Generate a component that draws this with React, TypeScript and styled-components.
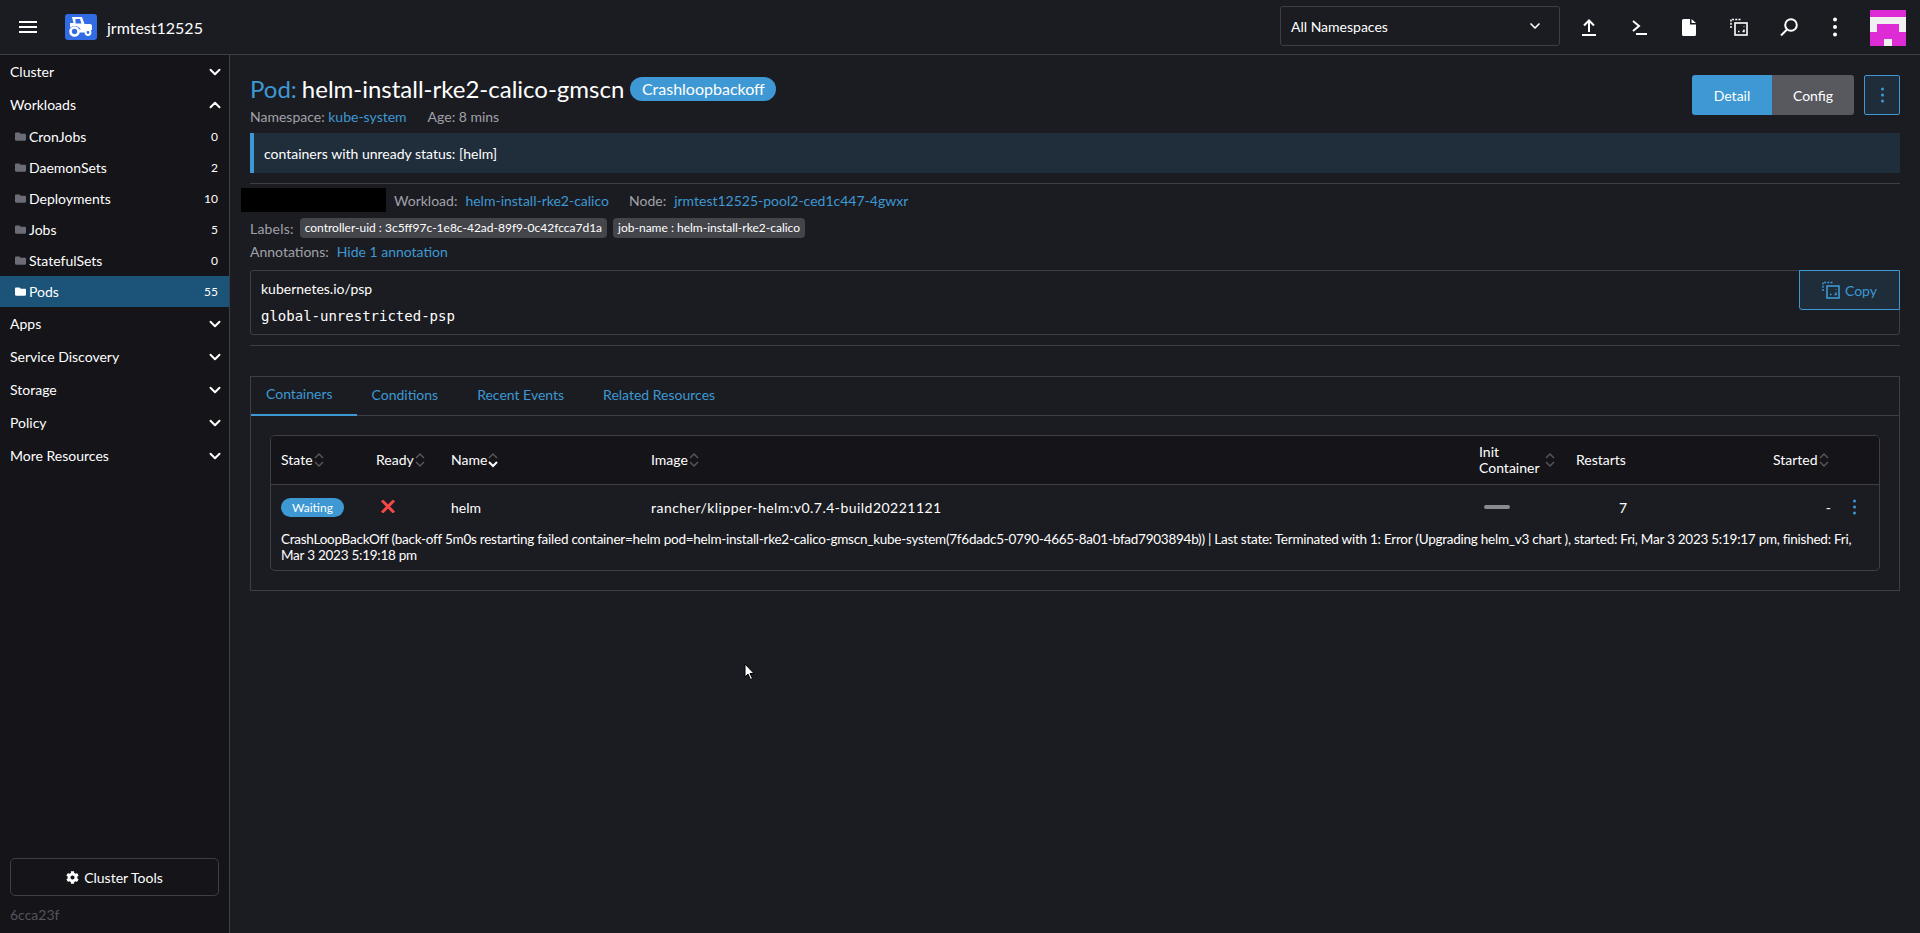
import styled, { createGlobalStyle } from "styled-components"
import { FaCog, FaFolder } from "react-icons/fa"
import { FiChevronDown, FiChevronUp } from "react-icons/fi"

const GlobalStyle = createGlobalStyle`
  html, body { margin: 0; padding: 0; height: 100%; background: #1b1c21; }
  body { font-family: Lato, "Open Sans", sans-serif; font-size: 14px; color: #fff; overflow: hidden; }
  * { box-sizing: border-box; }
  #root { height: 100%; }
`

const Page = styled.div`
  position: relative;
  height: 933px;
  display: flex;
  flex-direction: column;
`

const Header = styled.header`
  height: 55px;
  flex: none;
  display: flex;
  align-items: center;
  border-bottom: 1px solid #3e3f44;
  background: #1b1c21;
`
const MenuButton = styled.div`
  width: 18px;
  height: 12px;
  margin: 0 28px 0 19px;
  border-top: 2px solid #fff;
  border-bottom: 2px solid #fff;
  position: relative;
  &::after {
    content: "";
    position: absolute;
    left: 0;
    right: 0;
    top: 3px;
    height: 2px;
    background: #fff;
  }
`
const LogoTile = styled.div`
  width: 32px;
  height: 26px;
  border-radius: 3px;
  background: #326ce5;
  display: flex;
  align-items: center;
  justify-content: center;
`
const ClusterName = styled.div`
  margin-left: 10px;
  font-size: 16px;
  flex: 1;
`
const NamespaceSelect = styled.div`
  width: 280px;
  height: 40px;
  margin-bottom: 2px;
  border: 1px solid #3e3f44;
  border-radius: 3px;
  display: flex;
  align-items: center;
  justify-content: space-between;
  padding: 0 16px 0 10px;
  font-size: 14px;
  svg { font-size: 16px; stroke-width: 2.5; }
`
const HeaderIcons = styled.div`
  display: flex;
  align-items: center;
  margin-left: 4px;
`
const HeaderIcon = styled.div<{ $narrow?: boolean }>`
  width: ${({ $narrow }) => ($narrow ? "42px" : "50px")};
  height: 40px;
  display: flex;
  align-items: center;
  justify-content: center;
`
const Avatar = styled.svg`
  width: 36px;
  height: 36px;
  margin: 2px 14px 0 14px;
  display: block;
`

const Body = styled.div`
  flex: 1;
  display: flex;
  min-height: 0;
`
const Sidebar = styled.aside`
  width: 230px;
  flex: none;
  background: #141419;
  border-right: 1px solid #3e3f44;
  display: flex;
  flex-direction: column;
  justify-content: space-between;
`
const GroupHead = styled.div`
  height: 33px;
  display: flex;
  align-items: center;
  justify-content: space-between;
  padding: 0 5px 0 10px;
  font-size: 14px;
  svg { font-size: 18px; stroke-width: 2.6; }
`
const NavItem = styled.div<{ $active?: boolean }>`
  height: 31px;
  display: flex;
  align-items: center;
  padding: 0 11px 0 15px;
  font-size: 14px;
  background: ${({ $active }) => ($active ? "#1b5478" : "transparent")};
  svg { font-size: 11px; color: ${({ $active }) => ($active ? "#fff" : "#6c6c76")}; margin-right: 3px; }
`
const NavLabel = styled.span`
  flex: 1;
`
const NavCount = styled.span`
  font-size: 12px;
`
const SideFooter = styled.div`
  padding: 0 10px 10px;
`
const ToolsButton = styled.div`
  width: 209px;
  height: 38px;
  border: 1px solid #3e3f44;
  border-radius: 5px;
  display: flex;
  align-items: center;
  justify-content: center;
  gap: 5px;
  font-size: 14px;
  svg { font-size: 13px; }
`
const Version = styled.div`
  margin-top: 10px;
  font-size: 14px;
  color: #55555c;
`

const Main = styled.main`
  flex: 1;
  min-width: 0;
  padding: 18px 20px 0 20px;
`
const TitleRow = styled.div`
  display: flex;
  justify-content: space-between;
  align-items: flex-start;
`
const TitleWrap = styled.div``
const Title = styled.h1`
  margin: 0;
  height: 31px;
  display: flex;
  align-items: center;
  font-size: 24px;
  font-weight: 400;
  line-height: 31px;
`
const TitleKind = styled.span`
  color: #3d98d3;
  margin-right: 5px;
`
const StateBadge = styled.span`
  margin-left: 6px;
  height: 24px;
  width: 146px;
  border-radius: 12px;
  background: #3d98d3;
  font-size: 16px;
  line-height: 24px;
  text-align: center;
`
const SubLine = styled.div`
  margin-top: 4px;
  display: flex;
  gap: 21px;
  font-size: 14px;
  line-height: 18px;
  color: #a1a1aa;
`
const Link = styled.span`
  color: #3d98d3;
`
const Actions = styled.div`
  display: flex;
  margin-top: 2px;
`
const ModeButton = styled.div<{ $on?: boolean }>`
  width: ${({ $on }) => ($on ? "80px" : "82px")};
  height: 40px;
  display: flex;
  align-items: center;
  justify-content: center;
  font-size: 14px;
  background: ${({ $on }) => ($on ? "#3d98d3" : "#58595f")};
  border-radius: ${({ $on }) => ($on ? "3px 0 0 3px" : "0 3px 3px 0")};
`
const ActionMenu = styled.div`
  width: 36px;
  height: 40px;
  margin-left: 10px;
  background: #1f2d3a;
  border: 1px solid #3d98d3;
  border-radius: 2px;
  display: flex;
  align-items: center;
  justify-content: center;
`
const Banner = styled.div`
  margin-top: 7px;
  height: 40px;
  background: #202d3b;
  border-left: 4px solid #3d98d3;
  display: flex;
  align-items: center;
  padding-left: 10px;
  font-size: 14px;
`
const Rule = styled.hr`
  margin: 10px 0 0;
  border: 0;
  border-top: 1px solid #3e3f44;
`
const InfoRow = styled.div`
  height: 24px;
  margin: 4px 0 0 -9px;
  display: flex;
  align-items: center;
  color: #a1a1aa;
  font-size: 14px;
`
const Redacted = styled.div`
  width: 145px;
  height: 24px;
  background: #000;
  margin-right: 8px;
`
const Key = styled.span`
  margin-right: 8px;
`
const NodeKey = styled(Key)`
  margin-left: 20px;
`
const LabelsRow = styled.div`
  height: 20px;
  margin-top: 6px;
  display: flex;
  align-items: center;
  gap: 6px;
  color: #a1a1aa;
`
const LabelsKey = styled.span`
  letter-spacing: 0.2px;
`
const Chip = styled.span`
  height: 20px;
  line-height: 20px;
  padding: 0 5px;
  border-radius: 4px;
  background: #44454a;
  color: #fff;
  font-size: 12px;
`
const AnnotationRow = styled.div`
  margin-top: 5px;
  height: 18px;
  line-height: 18px;
  color: #a1a1aa;
  display: flex;
`
const AnnotationBox = styled.div`
  position: relative;
  margin-top: 9px;
  height: 65px;
  border: 1px solid #3e3f44;
  border-radius: 3px;
  padding: 9px 10px;
`
const AnnotationKey = styled.div`
  font-size: 14px;
  line-height: 18px;
`
const AnnotationValue = styled.div`
  margin-top: 9px;
  font-family: "DejaVu Sans Mono", "Liberation Mono", monospace;
  font-size: 14px;
  line-height: 18px;
`
const CopyButton = styled.div`
  position: absolute;
  top: -1px;
  right: -1px;
  width: 101px;
  height: 40px;
  background: #1f2d3a;
  border: 1px solid #3d98d3;
  border-radius: 0 0 0 3px;
  color: #3d98d3;
  display: flex;
  align-items: center;
  justify-content: center;
  gap: 5px;
`
const TabPanel = styled.section`
  margin-top: 30px;
  height: 215px;
  border: 1px solid #3e3f44;
`
const TabBar = styled.div`
  height: 39px;
  display: flex;
  border-bottom: 1px solid #3e3f44;
`
const Tab = styled.div<{ $on?: boolean }>`
  padding: 0 24px 4px 15px;
  height: 39px;
  display: flex;
  align-items: center;
  font-size: 14px;
  color: #3d98d3;
  border-bottom: ${({ $on }) => ($on ? "2px solid #3d98d3" : "0")};
`
const TabBody = styled.div`
  padding: 19px;
`
const Table = styled.div`
  border: 1px solid #3e3f44;
  border-radius: 5px;
  height: 136px;
  overflow: hidden;
`
const COLUMNS = "95px 75px 200px 828px 97px 197px 58px 1fr"
const TableHead = styled.div`
  height: 49px;
  background: #141419;
  border-bottom: 1px solid #3e3f44;
  display: grid;
  grid-template-columns: ${COLUMNS};
  padding-left: 10px;
  align-items: center;
`
const HeadCell = styled.div`
  display: flex;
  align-items: center;
  font-size: 14px;
  line-height: 16px;
`
const InitHeadLabel = styled.span`
  margin-right: 4px;
`
const Row = styled.div`
  height: 44px;
  display: grid;
  grid-template-columns: ${COLUMNS};
  padding-left: 10px;
  align-items: center;
  font-size: 14px;
`
const WaitingBadge = styled.span`
  width: 63px;
  height: 19px;
  line-height: 19px;
  border-radius: 10px;
  background: #3d98d3;
  text-align: center;
  font-size: 12px;
`
const ReadyMark = styled.svg`
  margin: -1px 0 0 5px;
  display: block;
`
const ImageName = styled.div`
  letter-spacing: 0.47px;
`
const InitDash = styled.div`
  width: 26px;
  height: 4px;
  border-radius: 2px;
  background: #8a8a92;
  margin-left: 5px;
`
const RestartCount = styled.div`
  text-align: right;
  padding-right: 146px;
`
const StartedValue = styled.div`
  text-align: right;
`
const RowMenu = styled.div`
  padding-left: 21px;
  display: flex;
`
const Message = styled.div`
  margin-top: 2px;
  padding: 0 20px 0 10px;
  font-size: 13.5px;
  letter-spacing: -0.25px;
  line-height: 16px;
`
const Cursor = styled.svg`
  position: absolute;
  left: 744px;
  top: 663px;
`

function SortArrows({ active }: { active?: boolean }) {
  return (
    <svg width="10" height="16" viewBox="0 0 10 16" fill="none" style={{ marginLeft: 1 }}>
      <path d="M1 6 L5 2 L9 6" stroke="#55565c" strokeWidth="1.5" />
      <path d="M1 10 L5 14 L9 10" stroke={active ? "#fff" : "#55565c"} strokeWidth={active ? 2 : 1.5} />
    </svg>
  )
}

function VerticalDots({ color, size = 3 }: { color: string; size?: number }) {
  return (
    <svg width={size + 2} height={size * 4 + 4} viewBox={`0 0 ${size + 2} ${size * 4 + 4}`} fill={color}>
      <circle cx={size / 2 + 1} cy={size / 2 + 0.5} r={size / 2} />
      <circle cx={size / 2 + 1} cy={size * 2 + 2} r={size / 2} />
      <circle cx={size / 2 + 1} cy={size * 3.5 + 3.5} r={size / 2} />
    </svg>
  )
}

function CopyIcon({ color, size }: { color: string; size: number }) {
  return (
    <svg width={size} height={size} viewBox="0 0 18 18" fill="none" stroke={color}>
      <path d="M1 10 V1.5 H11" strokeWidth="1.5" strokeDasharray="2 1.2" />
      <rect x="5" y="5" width="12" height="12" strokeWidth="1.6" />
      <path d="M8 13.5 H9.5 M12.5 13.5 H14 V11.5 M14 8.5 V8" strokeWidth="1.5" />
    </svg>
  )
}

function Tractor() {
  return (
    <svg width="27" height="20" viewBox="0 0 27 20" fill="#fff">
      <path d="M4 0 H14 L16.5 7 H22 Q24 7 24 9 V13 H13 Q11 9 6.5 9 Q4 9 2 10.5 V6 H5.5 Z" />
      <path d="M7.5 2 H12 L13.5 6.5 H7.5 Z" fill="#326ce5" />
      <circle cx="6.5" cy="14.5" r="4" fill="none" stroke="#fff" strokeWidth="2.6" />
      <circle cx="20" cy="15.5" r="2.4" fill="none" stroke="#fff" strokeWidth="2" />
      <rect x="10" y="12.5" width="8" height="3" />
    </svg>
  )
}

const navItems = [
  { name: "CronJobs", count: 0 },
  { name: "DaemonSets", count: 2 },
  { name: "Deployments", count: 10 },
  { name: "Jobs", count: 5 },
  { name: "StatefulSets", count: 0 },
  { name: "Pods", count: 55, active: true },
]

const lowerGroups = ["Apps", "Service Discovery", "Storage", "Policy", "More Resources"]

export default function App() {
  return (
    <Page>
      <GlobalStyle />
      <Header>
        <MenuButton />
        <LogoTile>
          <Tractor />
        </LogoTile>
        <ClusterName>jrmtest12525</ClusterName>
        <NamespaceSelect>
          All Namespaces
          <FiChevronDown />
        </NamespaceSelect>
        <HeaderIcons>
          <HeaderIcon>
            <svg width="16" height="17" viewBox="0 0 16 17" fill="none" stroke="#fff" strokeWidth="2">
              <path d="M8 13 V2 M3 6.5 L8 1.5 L13 6.5 M1 16 H15" />
            </svg>
          </HeaderIcon>
          <HeaderIcon>
            <svg width="15" height="15" viewBox="0 0 15 15" fill="none" stroke="#fff" strokeWidth="2">
              <path d="M1 1 L7 6 L1 11 M4 14 H15" />
            </svg>
          </HeaderIcon>
          <HeaderIcon>
            <svg width="14" height="17" viewBox="0 0 14 17" fill="#fff">
              <path d="M1.5 0 H8 V5.5 H14 V15.5 Q14 17 12.5 17 H1.5 Q0 17 0 15.5 V1.5 Q0 0 1.5 0 Z" />
              <path d="M9.5 0 L14 4 H9.5 Z" />
            </svg>
          </HeaderIcon>
          <HeaderIcon>
            <CopyIcon color="#fff" size={18} />
          </HeaderIcon>
          <HeaderIcon>
            <svg width="18" height="18" viewBox="0 0 18 18" fill="none" stroke="#fff" strokeWidth="2">
              <circle cx="11" cy="7" r="5.8" />
              <path d="M7 11.5 L1 17.5" />
            </svg>
          </HeaderIcon>
          <HeaderIcon $narrow>
            <VerticalDots color="#fff" size={4} />
          </HeaderIcon>
        </HeaderIcons>
        <Avatar viewBox="0 0 5 5" shapeRendering="crispEdges">
          <rect width="5" height="5" fill="#dd2bd5" />
          <rect y="1" width="5" height="1" fill="#f0f0f0" />
          <rect y="2" width="1" height="1" fill="#f0f0f0" />
          <rect x="4" y="2" width="1" height="1" fill="#f0f0f0" />
          <rect x="2" y="4" width="1" height="1" fill="#f0f0f0" />
        </Avatar>
      </Header>
      <Body>
        <Sidebar>
          <nav>
            <GroupHead>
              Cluster
              <FiChevronDown />
            </GroupHead>
            <GroupHead>
              Workloads
              <FiChevronUp />
            </GroupHead>
            {navItems.map((item) => (
              <NavItem key={item.name} $active={item.active}>
                <FaFolder />
                <NavLabel>{item.name}</NavLabel>
                <NavCount>{item.count}</NavCount>
              </NavItem>
            ))}
            {lowerGroups.map((group) => (
              <GroupHead key={group}>
                {group}
                <FiChevronDown />
              </GroupHead>
            ))}
          </nav>
          <SideFooter>
            <ToolsButton>
              <FaCog />
              Cluster Tools
            </ToolsButton>
            <Version>6cca23f</Version>
          </SideFooter>
        </Sidebar>
        <Main>
          <TitleRow>
            <TitleWrap>
              <Title>
                <TitleKind>Pod:</TitleKind>
                helm-install-rke2-calico-gmscn
                <StateBadge>Crashloopbackoff</StateBadge>
              </Title>
              <SubLine>
                <span>
                  Namespace: <Link>kube-system</Link>
                </span>
                <span>Age: 8 mins</span>
              </SubLine>
            </TitleWrap>
            <Actions>
              <ModeButton $on>Detail</ModeButton>
              <ModeButton>Config</ModeButton>
              <ActionMenu>
                <VerticalDots color="#3d98d3" />
              </ActionMenu>
            </Actions>
          </TitleRow>
          <Banner>containers with unready status: [helm]</Banner>
          <Rule />
          <InfoRow>
            <Redacted />
            <Key>Workload:</Key>
            <Link>helm-install-rke2-calico</Link>
            <NodeKey>Node:</NodeKey>
            <Link>jrmtest12525-pool2-ced1c447-4gwxr</Link>
          </InfoRow>
          <LabelsRow>
            <LabelsKey>Labels:</LabelsKey>
            <Chip>controller-uid : 3c5ff97c-1e8c-42ad-89f9-0c42fcca7d1a</Chip>
            <Chip>job-name : helm-install-rke2-calico</Chip>
          </LabelsRow>
          <AnnotationRow>
            <Key>Annotations:</Key>
            <Link>Hide 1 annotation</Link>
          </AnnotationRow>
          <AnnotationBox>
            <AnnotationKey>kubernetes.io/psp</AnnotationKey>
            <AnnotationValue>global-unrestricted-psp</AnnotationValue>
            <CopyButton>
              <CopyIcon color="#3d98d3" size={18} />
              Copy
            </CopyButton>
          </AnnotationBox>
          <Rule />
          <TabPanel>
            <TabBar>
              <Tab $on>Containers</Tab>
              <Tab>Conditions</Tab>
              <Tab>Recent Events</Tab>
              <Tab>Related Resources</Tab>
            </TabBar>
            <TabBody>
              <Table>
                <TableHead>
                  <HeadCell>
                    State
                    <SortArrows />
                  </HeadCell>
                  <HeadCell>
                    Ready
                    <SortArrows />
                  </HeadCell>
                  <HeadCell>
                    Name
                    <SortArrows active />
                  </HeadCell>
                  <HeadCell>
                    Image
                    <SortArrows />
                  </HeadCell>
                  <HeadCell>
                    <InitHeadLabel>
                      Init
                      <br />
                      Container
                    </InitHeadLabel>
                    <SortArrows />
                  </HeadCell>
                  <HeadCell>Restarts</HeadCell>
                  <HeadCell>
                    Started
                    <SortArrows />
                  </HeadCell>
                </TableHead>
                <Row>
                  <WaitingBadge>Waiting</WaitingBadge>
                  <ReadyMark width="14" height="13" viewBox="0 0 14 13" fill="none" stroke="#f64747" strokeWidth="3">
                    <path d="M1 0.5 L13 12.5 M13 0.5 L1 12.5" />
                  </ReadyMark>
                  <div>helm</div>
                  <ImageName>rancher/klipper-helm:v0.7.4-build20221121</ImageName>
                  <InitDash />
                  <RestartCount>7</RestartCount>
                  <StartedValue>-</StartedValue>
                  <RowMenu>
                    <VerticalDots color="#3d98d3" />
                  </RowMenu>
                </Row>
                <Message>
                  CrashLoopBackOff (back-off 5m0s restarting failed container=helm pod=helm-install-rke2-calico-gmscn_kube-system(7f6dadc5-0790-4665-8a01-bfad7903894b)) | Last state: Terminated with 1: Error (Upgrading helm_v3 chart ), started: Fri, Mar 3 2023 5:19:17 pm, finished: Fri, Mar 3 2023 5:19:18 pm
                </Message>
              </Table>
            </TabBody>
          </TabPanel>
        </Main>
      </Body>
      <Cursor width="12" height="18" viewBox="0 0 12 18">
        <path d="M1 1 V14 L4 11 L6.5 16.5 L8.5 15.5 L6 10.5 H10 Z" fill="#fff" stroke="#000" strokeWidth="1" />
      </Cursor>
    </Page>
  )
}
